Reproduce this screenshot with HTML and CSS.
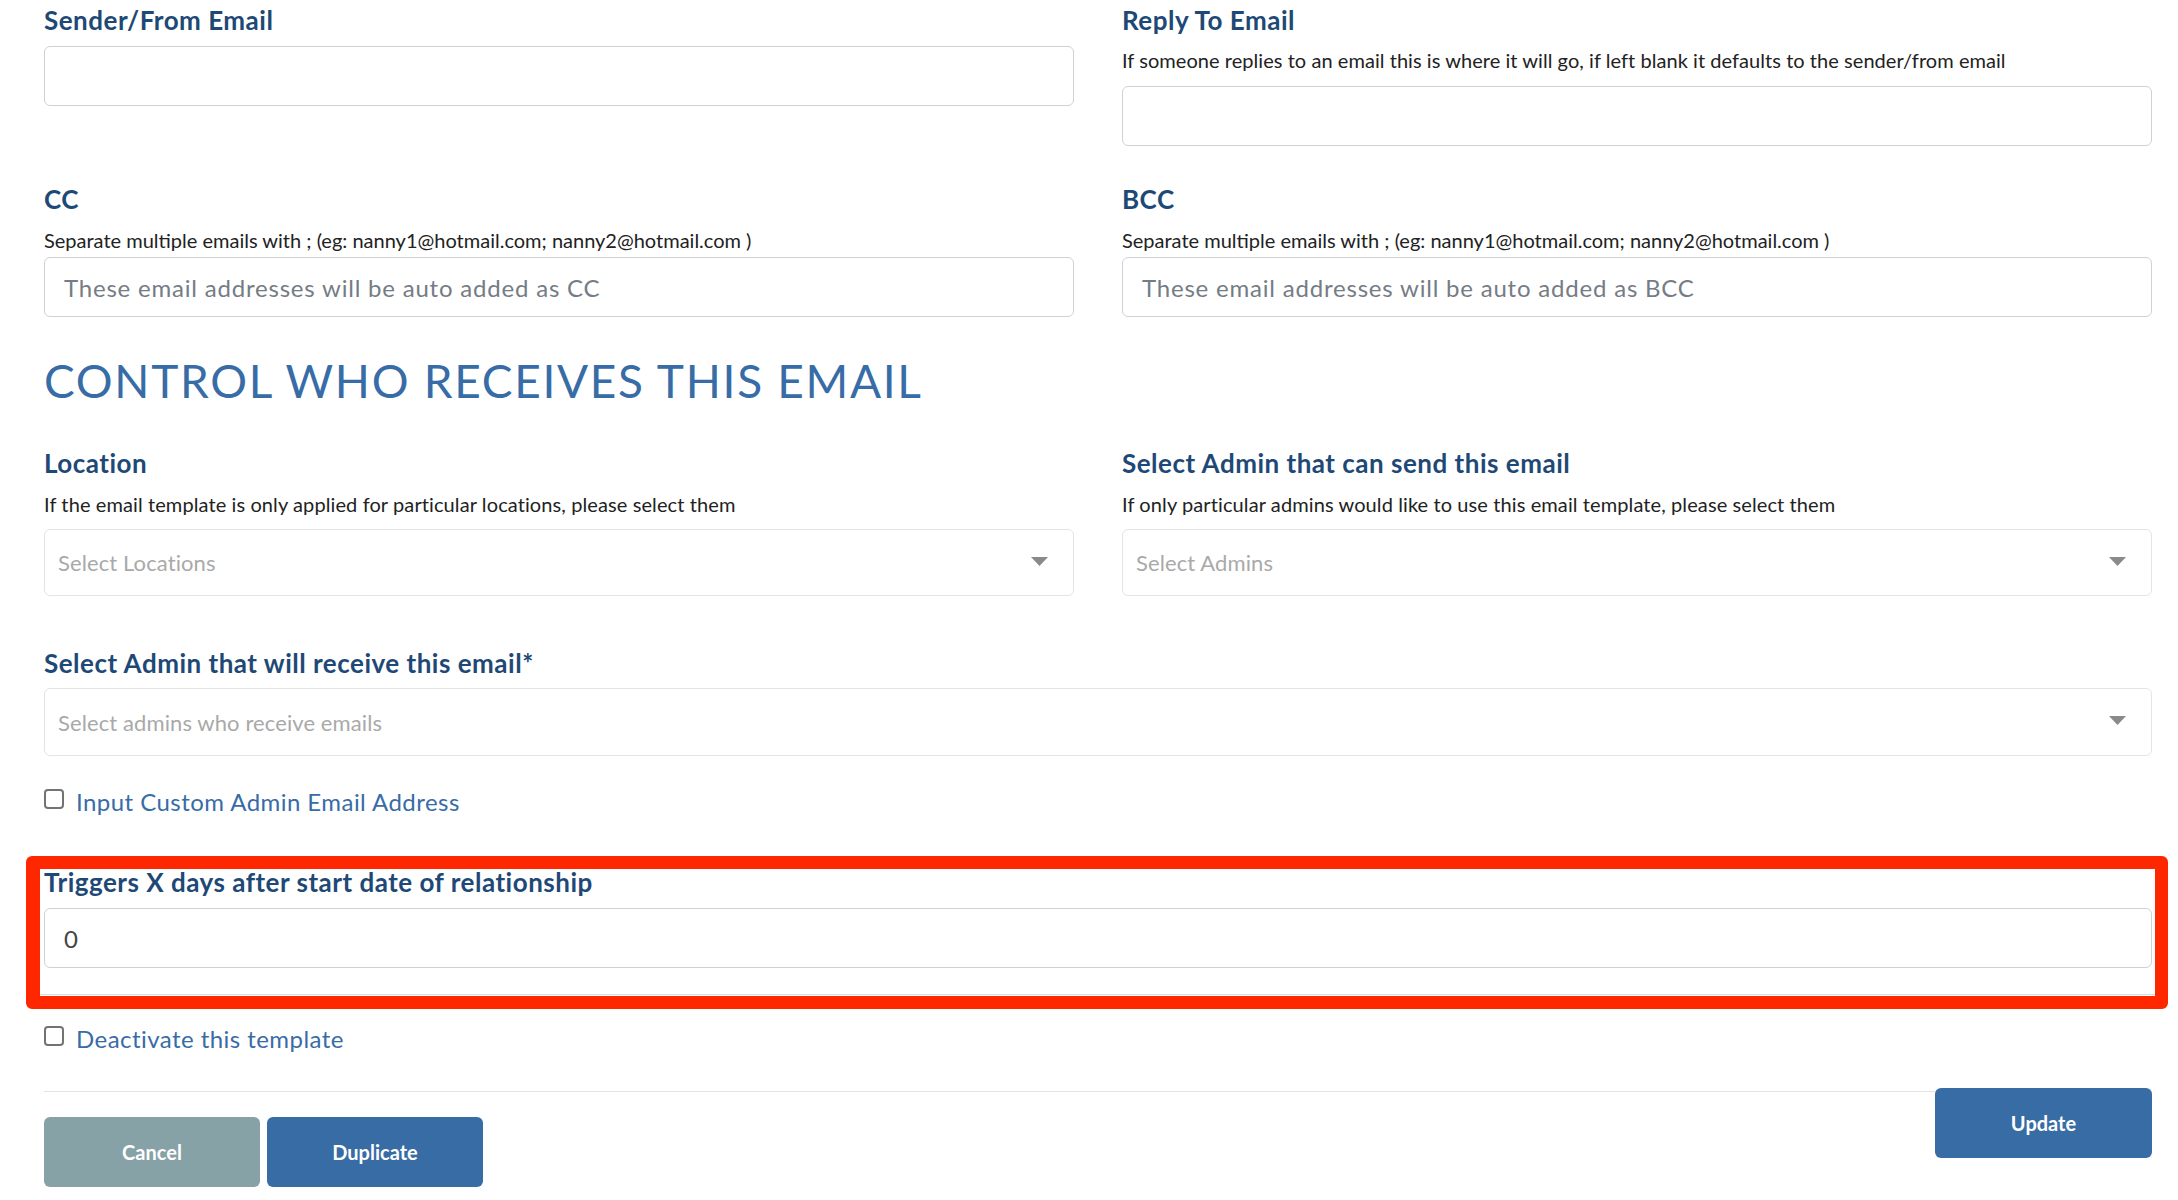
FILE: index.html
```html
<!DOCTYPE html>
<html lang="en">
<head>
<meta charset="utf-8">
<title>Email template</title>
<link rel="stylesheet" href="styles.css">
</head>
<body>
<div class="page">
  <div class="row">
    <div class="field">
      <label class="lbl">Sender/From Email</label>
      <input class="inp inp-first" type="text">
    </div>
    <div class="field">
      <label class="lbl">Reply To Email</label>
      <p class="help help-reply">If someone replies to an email this is where it will go, if left blank it defaults to the sender/from email</p>
      <input class="inp" type="text">
    </div>
  </div>

  <div class="row row-cc">
    <div class="field">
      <label class="lbl">CC</label>
      <p class="help">Separate multiple emails with ; (eg: nanny1@hotmail.com; nanny2@hotmail.com )</p>
      <input class="inp" type="text" placeholder="These email addresses will be auto added as CC">
    </div>
    <div class="field">
      <label class="lbl">BCC</label>
      <p class="help">Separate multiple emails with ; (eg: nanny1@hotmail.com; nanny2@hotmail.com )</p>
      <input class="inp" type="text" placeholder="These email addresses will be auto added as BCC">
    </div>
  </div>

  <h2 class="section-title">CONTROL WHO RECEIVES THIS EMAIL</h2>

  <div class="row row-loc">
    <div class="field">
      <label class="lbl">Location</label>
      <p class="help help-select">If the email template is only applied for particular locations, please select them</p>
      <div class="select"><span class="ph">Select Locations</span><svg class="caret" width="17" height="9" viewBox="0 0 17 9"><polygon points="0,0 17,0 8.5,9" fill="#8a8a8a"/></svg></div>
    </div>
    <div class="field">
      <label class="lbl">Select Admin that can send this email</label>
      <p class="help help-select">If only particular admins would like to use this email template, please select them</p>
      <div class="select"><span class="ph">Select Admins</span><svg class="caret" width="17" height="9" viewBox="0 0 17 9"><polygon points="0,0 17,0 8.5,9" fill="#8a8a8a"/></svg></div>
    </div>
  </div>

  <div class="block-receive">
    <label class="lbl">Select Admin that will receive this email*</label>
    <div class="select select-receive"><span class="ph">Select admins who receive emails</span><svg class="caret" width="17" height="9" viewBox="0 0 17 9"><polygon points="0,0 17,0 8.5,9" fill="#8a8a8a"/></svg></div>
  </div>

  <label class="check check-custom"><input type="checkbox" class="cb"><span>Input Custom Admin Email Address</span></label>

  <div class="highlight">
    <div class="trig">
      <label class="lbl lbl-trig">Triggers X days after start date of relationship</label>
      <input class="inp inp-trig" type="text" value="0">
    </div>
  </div>

  <label class="check check-deact"><input type="checkbox" class="cb"><span>Deactivate this template</span></label>

  <div class="footer">
    <div class="footer-left">
      <div class="rule"></div>
      <div class="btns">
        <button class="btn btn-cancel">Cancel</button>
        <button class="btn btn-primary">Duplicate</button>
      </div>
    </div>
    <button class="btn btn-primary btn-update">Update</button>
  </div>
</div>
</body>
</html>
```

FILE: styles.css
```css
html, body {
  margin: 0;
  background: #ffffff;
}

body {
  font-family: Lato, "Liberation Sans", sans-serif;
  color: #222222;
}

.page {
  padding: 4px 26px 0 44px;
}

.row {
  display: grid;
  grid-template-columns: 1fr 1fr;
  column-gap: 48px;
  align-items: start;
}

.row-cc {
  margin-top: 37px;
}

.row-loc {
  margin-top: 38px;
}

.lbl {
  display: block;
  margin: 0;
  font-weight: 700;
  font-size: 26px;
  line-height: 32px;
  color: #1e4976;
  letter-spacing: 0.5px;
}

.help {
  margin: 12px 0 4px;
  font-size: 20px;
  line-height: 26px;
  color: #222222;
}

.help-reply {
  margin: 11px 0 13px;
  letter-spacing: 0.05px;
}

.help-select {
  margin: 12px 0 12px;
  letter-spacing: 0.1px;
}

.inp {
  display: block;
  width: 100%;
  box-sizing: border-box;
  height: 60px;
  margin: 0;
  padding: 0 19px;
  border: 1px solid #cdd2d9;
  border-radius: 6px;
  background: #ffffff;
  font-family: Lato, "Liberation Sans", sans-serif;
  font-size: 24px;
  letter-spacing: 0.8px;
  color: #444444;
  outline: none;
}

.inp::placeholder {
  color: #757c85;
  opacity: 1;
}

.inp-first {
  margin-top: 10px;
}

.section-title {
  margin: 36px 0 0;
  font-weight: 400;
  font-size: 46px;
  line-height: 56px;
  color: #386ca6;
  letter-spacing: 1.7px;
}

.select {
  display: flex;
  align-items: center;
  justify-content: space-between;
  box-sizing: border-box;
  height: 67px;
  padding: 0 25px 0 13px;
  border: 1px solid #e4e4e4;
  border-radius: 6px;
  background: #ffffff;
}

.ph {
  font-size: 22px;
  color: #a9a9a9;
  letter-spacing: 0.1px;
}

.caret {
  display: block;
  margin-top: -3px;
}

.block-receive {
  margin-top: 51px;
}

.select-receive {
  margin-top: 9px;
  height: 68px;
}

.check {
  display: flex;
  align-items: flex-start;
  font-size: 24px;
  line-height: 30px;
  color: #386ca6;
  letter-spacing: 0.45px;
}

.check-custom {
  margin-top: 31px;
}

.check-deact {
  margin-top: 15px;
}

.cb {
  appearance: none;
  -webkit-appearance: none;
  flex: none;
  box-sizing: border-box;
  width: 20px;
  height: 20px;
  margin: 2px 12px 0 0;
  border: 2px solid #737373;
  border-radius: 4px;
  background: #ffffff;
}

.highlight {
  margin: 39px -16px 0 -18px;
  padding: 0 0 1px 0;
  border: 13px solid #ff2700;
  border-left-width: 14px;
  border-radius: 6px;
}

.trig {
  padding: 0 3px 26px 4px;
  border-bottom: 1px solid #dcdcdc;
}

.lbl-trig {
  line-height: 26px;
}

.inp-trig {
  margin-top: 13px;
}

.footer {
  display: flex;
  align-items: flex-start;
  margin-top: 34px;
}

.footer-left {
  flex: 1;
}

.rule {
  height: 1px;
  margin-top: 3px;
  background: #e4e4e4;
}

.btns {
  display: flex;
  gap: 7px;
  margin-top: 25px;
}

.btn {
  width: 216px;
  height: 70px;
  border: 0;
  border-radius: 6px;
  color: #ffffff;
  font-family: Lato, "Liberation Sans", sans-serif;
  font-weight: 700;
  font-size: 20px;
  cursor: pointer;
}

.btn-cancel {
  background: #86a2a7;
}

.btn-primary {
  background: #386ca4;
}

.btn-update {
  width: 217px;
}
```
